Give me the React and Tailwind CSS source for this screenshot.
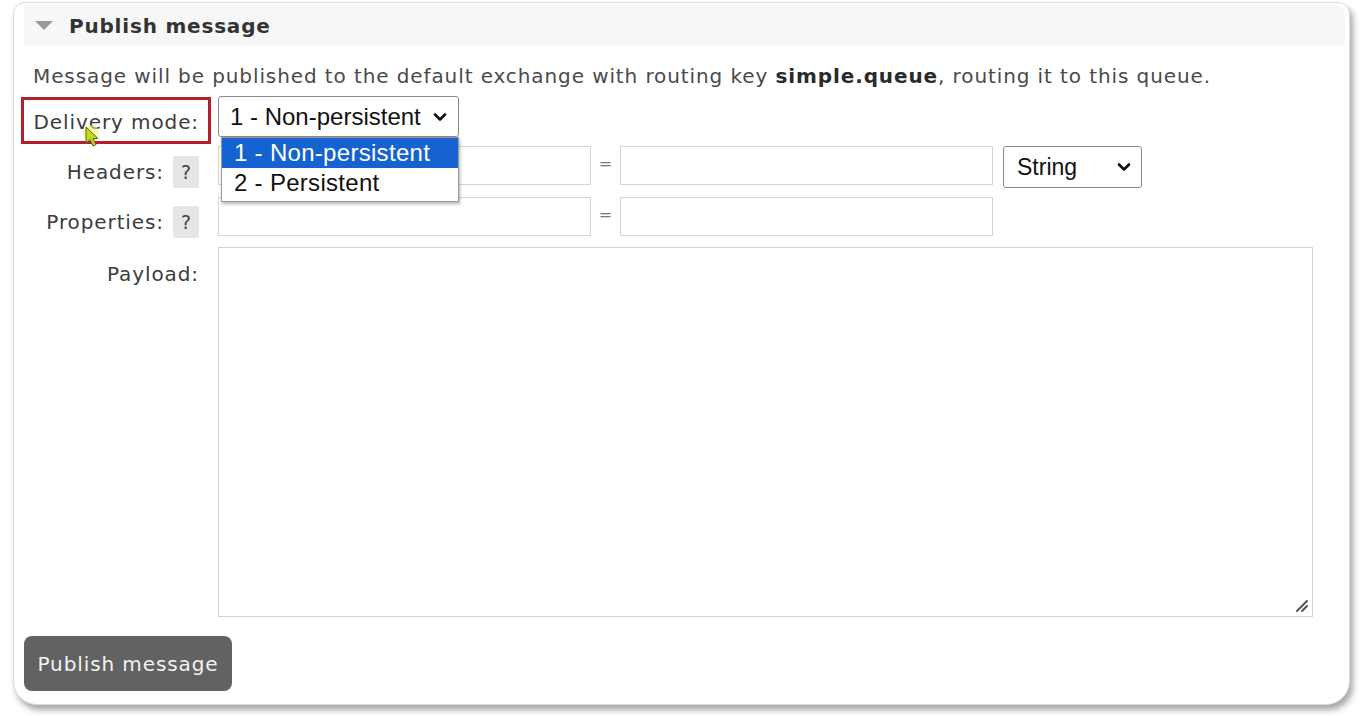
import React from "react";

const sans = { fontFamily: '"DejaVu Sans", Verdana, sans-serif' };
const arial = { fontFamily: '"Liberation Sans", Arial, sans-serif' };

function Chevron({ className = "" }) {
  return (
    <svg width="14" height="10" viewBox="0 0 14 10" className={className}>
      <path d="M2 2.5 L7 7.5 L12 2.5" fill="none" stroke="#111" strokeWidth="2.6" strokeLinecap="round" strokeLinejoin="round" />
    </svg>
  );
}

function Help() {
  return (
    <span className="flex items-center justify-center w-[26px] h-[32px] bg-[#e6e6e6] text-[#444] text-[19px] rounded-[2px]" style={sans}>
      ?
    </span>
  );
}

function Input({ w }) {
  return <div className={`${w} h-[39px] border border-[#d4d4d4] bg-white`} />;
}

export default function App() {
  return (
    <div className="relative w-[1360px] h-[716px] bg-white overflow-hidden text-[#3c3c3c]" style={sans}>
      <div className="ml-[13px] mt-[2px] w-[1337px] h-[703px] border border-[#dcdcdc] rounded-t-[12px] rounded-b-[24px] bg-white shadow-[3px_5px_6px_rgba(0,0,0,0.35)] flex flex-col">
        {/* header band */}
        <div className="ml-[10px] mt-[2px] w-[1321px] h-[41px] bg-[#f7f7f7] rounded-tr-[10px] flex items-center">
          <svg width="18" height="10" viewBox="0 0 18 10" className="ml-[11px]">
            <path d="M0 0 L18 0 L9 9 Z" fill="#9a9a9a" />
          </svg>
          <span className="ml-[16px] text-[20px] font-bold text-[#333] tracking-[0.8px]">Publish message</span>
        </div>

        {/* description */}
        <div className="ml-[19px] mt-[18px] h-[24px] leading-[24px] text-[20px] tracking-[0.9px] text-[#4a4a4a] whitespace-nowrap">
          Message will be published to the default exchange with routing key <b className="text-[#2a2a2a]">simple.queue</b>, routing it to this queue.
        </div>

        {/* delivery mode */}
        <div className="mt-[8px] flex items-center h-[41px]">
          <div className="w-[185px] flex justify-end text-[20px] tracking-[0.9px] leading-[24px] pt-[11px]">Delivery mode:</div>
          <div className="ml-[19px] w-[241px] h-[41px] border border-[#8a8a8a] rounded-[3px] flex items-center bg-white" style={arial}>
            <span className="ml-[11px] text-[24px] text-[#111] leading-none">1 - Non-persistent</span>
            <Chevron className="ml-auto mr-[11px]" />
          </div>
        </div>

        {/* headers */}
        <div className="mt-[9px] flex items-start h-[42px]">
          <div className="w-[185px] flex justify-end items-center gap-[9px] pt-[10px]">
            <span className="text-[20px] tracking-[0.9px] leading-[24px]">Headers:</span>
            <Help />
          </div>
          <div className="ml-[19px] flex items-start">
            <Input w="w-[373px]" />
            <span className="w-[29px] text-center text-[16px] text-[#777] leading-[36px]">=</span>
            <Input w="w-[373px]" />
            <div className="ml-[10px] w-[139px] h-[42px] border border-[#8a8a8a] rounded-[3px] flex items-center bg-white" style={arial}>
              <span className="ml-[13px] text-[23px] text-[#111] leading-none">String</span>
              <Chevron className="ml-auto mr-[10px]" />
            </div>
          </div>
        </div>

        {/* properties */}
        <div className="mt-[9px] flex items-start h-[41px]">
          <div className="w-[185px] flex justify-end items-center gap-[9px] pt-[9px]">
            <span className="text-[20px] tracking-[0.9px] leading-[24px]">Properties:</span>
            <Help />
          </div>
          <div className="ml-[19px] flex items-start">
            <Input w="w-[373px]" />
            <span className="w-[29px] text-center text-[16px] text-[#777] leading-[36px]">=</span>
            <Input w="w-[373px]" />
          </div>
        </div>

        {/* payload */}
        <div className="mt-[9px] flex items-start">
          <div className="w-[185px] flex justify-end text-[20px] tracking-[0.9px] leading-[24px] pt-[15px]">Payload:</div>
          <div className="relative ml-[19px] w-[1095px] h-[370px] border border-[#d4d4d4] bg-white">
            <svg width="14" height="14" viewBox="0 0 14 14" className="absolute right-[3px] bottom-[3px]">
              <path d="M2 12 L12 2 M7 12 L12 7" stroke="#555" strokeWidth="2" strokeLinecap="round" />
            </svg>
          </div>
        </div>

        {/* button */}
        <div className="mt-[19px] ml-[10px]">
          <div className="w-[208px] h-[55px] rounded-[8px] bg-[#626262] flex items-center justify-center text-[20px] tracking-[0.9px] text-[#f2f2f2]">
            Publish message
          </div>
        </div>
      </div>

      {/* annotation box */}
      <div className="absolute left-[21px] top-[97px] w-[190px] h-[47px] border-[3px] border-[#b3202c] pointer-events-none" />

      {/* open dropdown list */}
      <div className="absolute left-[221px] top-[137px] w-[238px] h-[65px] bg-white border border-[#9a9a9a] shadow-[1px_2px_3px_rgba(0,0,0,0.3)] flex flex-col" style={arial}>
        <div className="h-[30px] bg-[#1463d0] text-white text-[24px] tracking-[0.3px] leading-[30px] pl-[12px]">1 - Non-persistent</div>
        <div className="h-[30px] text-[#111] text-[24px] tracking-[0.3px] leading-[30px] pl-[12px]">2 - Persistent</div>
      </div>

      {/* cursor */}
      <svg width="22" height="28" viewBox="0 0 22 28" className="absolute left-[82px] top-[123px]">
        <circle cx="9" cy="10" r="8" fill="#f3f57a" opacity="0.55" />
        <path d="M4 4 L4 20 L8 16.5 L11 23 L14 21.6 L11 15.5 L16 15.5 Z" fill="#c6d81a" stroke="#5a6410" strokeWidth="1" strokeLinejoin="round" />
      </svg>
    </div>
  );
}
